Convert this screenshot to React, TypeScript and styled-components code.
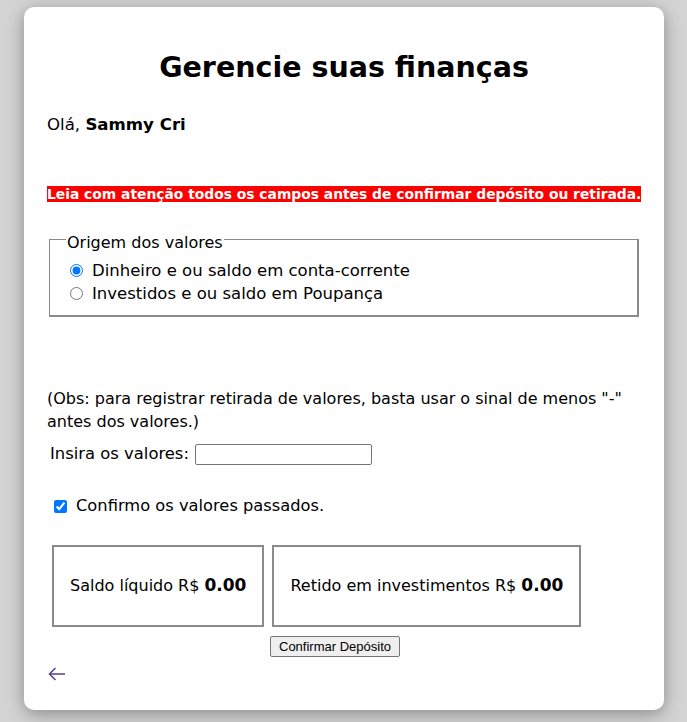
import React, { useState } from 'react'
import styled, { createGlobalStyle } from 'styled-components'

const GlobalStyle = createGlobalStyle`
  html, body {
    margin: 0;
    padding: 0;
  }
  body {
    background: #d4d4d4;
    font-family: "DejaVu Sans", Tahoma, sans-serif;
    color: #000;
  }
`

export default function App () {
  const [origin, setOrigin] = useState('conta')
  const [confirmed, setConfirmed] = useState(true)
  const [value, setValue] = useState('')

  return (
    <Page>
      <GlobalStyle />
      <Card>
        <Title>Gerencie suas finanças</Title>
        <Greeting>Olá, <b>Sammy Cri</b></Greeting>

        <Warning><span>Leia com atenção todos os campos antes de confirmar depósito ou retirada.</span></Warning>

        <Fieldset>
          <Legend>Origem dos valores</Legend>
          <RadioRow>
            <input
              type='radio'
              name='origin'
              checked={origin === 'conta'}
              onChange={() => setOrigin('conta')}
            />
            Dinheiro e ou saldo em conta-corrente
          </RadioRow>
          <RadioRow>
            <input
              type='radio'
              name='origin'
              checked={origin === 'poupanca'}
              onChange={() => setOrigin('poupanca')}
            />
            Investidos e ou saldo em Poupança
          </RadioRow>
        </Fieldset>

        <Note>(Obs: para registrar retirada de valores, basta usar o sinal de menos "-" antes dos valores.)</Note>

        <InputRow>
          Insira os valores:
          <ValueInput value={value} onChange={e => setValue(e.target.value)} />
        </InputRow>

        <CheckRow>
          <input type='checkbox' checked={confirmed} onChange={e => setConfirmed(e.target.checked)} />
          Confirmo os valores passados.
        </CheckRow>

        <Totals>
          <TotalBox>Saldo líquido R$ <b>0.00</b></TotalBox>
          <TotalBox>Retido em investimentos R$ <b>0.00</b></TotalBox>
        </Totals>

        <Actions>
          <ConfirmButton type='button'>Confirmar Depósito</ConfirmButton>
        </Actions>

        <BackLink href='#' aria-label='Voltar'>
          <svg width='20' height='16' viewBox='0 0 20 16' fill='none' stroke='currentColor' strokeWidth='1.5'>
            <path d='M18 8H2.5' />
            <path d='M8.5 2L2.5 8l6 6' />
          </svg>
        </BackLink>
      </Card>
    </Page>
  )
}

const Page = styled.div`
  min-height: 100vh;
  box-sizing: border-box;
  padding: 7px 23px 13px 24px;
`

const Card = styled.main`
  background: #fff;
  border-radius: 10px;
  box-shadow: 0 4px 18px rgba(0, 0, 0, 0.35);
  padding: 28px 23px 24px;
  font-size: 16px;
`

const Title = styled.h1`
  margin: 16px 0 30px;
  text-align: center;
  font-size: 28.5px;
  font-weight: bold;
`

const Greeting = styled.p`
  margin: 0;
  font-size: 16.6px;
  line-height: 22px;
`

const Warning = styled.p`
  margin: 49px 0 0;
  font-size: 13.85px;
  font-weight: bold;
  line-height: 18px;
  white-space: nowrap;

  span {
    background: #ff0000;
    color: #fff;
  }
`

const Fieldset = styled.fieldset`
  margin: 22px 2px 0;
  padding: 6px 10px 10px 18px;
  border-color: #8a8a8a;
  border-style: solid;
  border-width: 1px 2px 2px 1px;
`

const Legend = styled.legend`
  padding: 8px 1px 0;
  margin-left: -2px;
  line-height: 20px;
`

const RadioRow = styled.label`
  display: flex;
  align-items: center;
  gap: 9px;
  font-size: 16.5px;
  line-height: 23px;

  input {
    margin: 0 0 0 2px;
    width: 13px;
    height: 13px;
  }
`

const Note = styled.p`
  margin: 70px 0 0;
  line-height: 23px;
`

const InputRow = styled.label`
  display: flex;
  align-items: center;
  gap: 6px;
  margin: 10px 0 0 3px;
  font-size: 16.4px;
  line-height: 22px;
`

const ValueInput = styled.input`
  width: 171px;
  height: 17px;
  padding: 1px 2px;
  border: 1px solid #767676;
  border-radius: 2px;
  font: 13px "Liberation Sans", Arial, sans-serif;
`

const CheckRow = styled.label`
  display: flex;
  align-items: center;
  gap: 9px;
  margin: 30px 0 0 7px;
  font-size: 16.3px;
  line-height: 22px;

  input {
    margin: 0;
    width: 13px;
    height: 13px;
  }
`

const Totals = styled.div`
  display: flex;
  gap: 8px;
  margin: 28px 0 0 5px;
`

const TotalBox = styled.div`
  border: 2px solid #8a8a8a;
  padding: 28px 16px 29px;
  line-height: 20px;
  font-size: 16px;

  b {
    font-size: 17px;
  }
`

const Actions = styled.div`
  display: flex;
  justify-content: center;
  margin: 9px 0 0;
  padding-right: 18px;
`

const ConfirmButton = styled.button`
  font: 13px "Liberation Sans", Arial, sans-serif;
  padding: 1px 8px;
  height: 21px;
  border: 1px solid #767676;
  border-radius: 2px;
  background: #efefef;
  color: #000;
`

const BackLink = styled.a`
  display: inline-flex;
  margin-top: 9px;
  color: #5a3e91;
`
